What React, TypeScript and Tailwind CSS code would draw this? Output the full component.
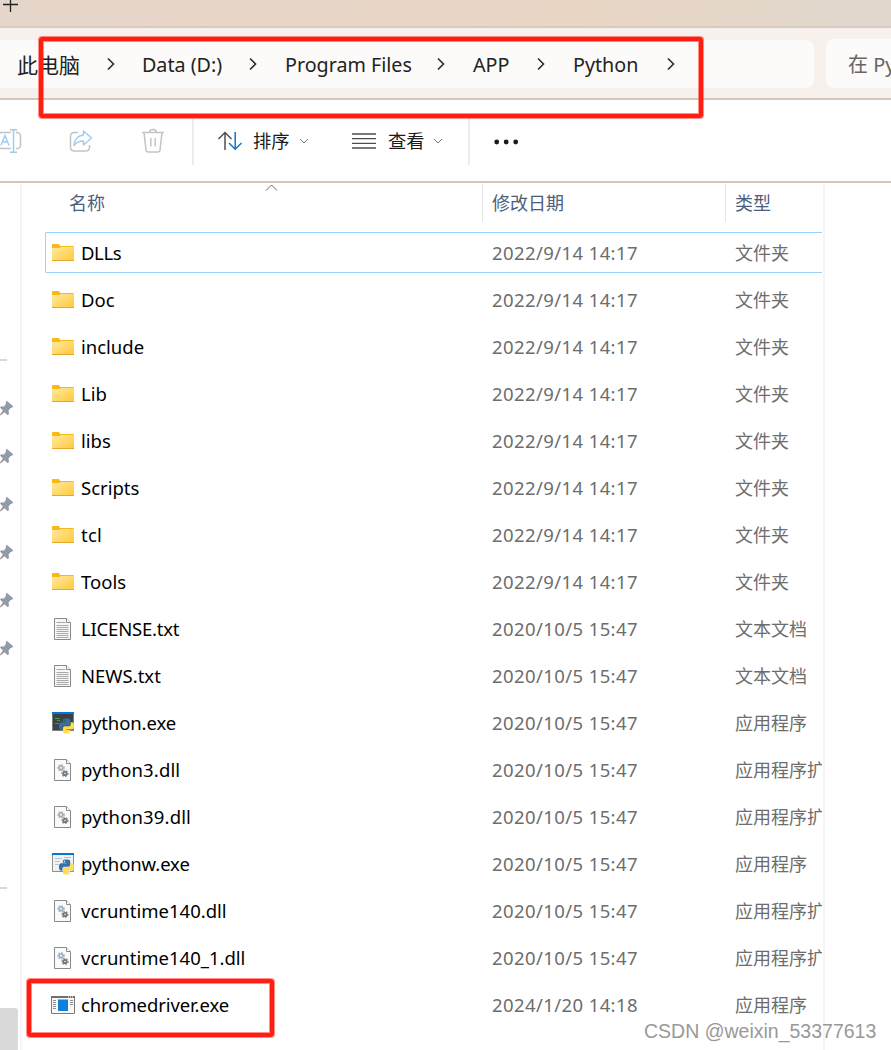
import type { ReactNode } from "react";

const PYTHON_HALF =
  "M14.25.18l.9.2.73.26.59.3.45.32.34.34.25.34.16.33.1.3.04.26.02.2-.01.13V8.5l-.05.63-.13.55-.21.46-.26.38-.3.31-.33.25-.35.19-.35.14-.33.1-.3.07-.26.04-.21.02H8.77l-.69.05-.59.14-.5.22-.41.27-.33.32-.27.35-.2.36-.15.37-.1.35-.07.32-.04.27-.02.21v3.06H3.17l-.21-.03-.28-.07-.32-.12-.35-.18-.36-.26-.36-.36-.35-.46-.32-.59-.28-.73-.21-.88-.14-1.05-.05-1.23.06-1.22.16-1.04.24-.87.32-.71.36-.57.4-.44.42-.33.42-.24.4-.16.36-.1.32-.05.24-.01h.16l.06.01h8.16v-.83H6.18l-.01-2.75-.02-.37.05-.34.11-.31.17-.28.25-.26.31-.23.38-.2.44-.18.51-.15.58-.12.64-.1.71-.06.77-.04.84-.02 1.27.05zm-6.3 1.98l-.23.33-.08.41.08.41.23.34.33.22.41.09.41-.09.33-.22.23-.34.08-.41-.08-.41-.23-.33-.33-.22-.41-.09-.41.09z";

type Kind = "folder" | "txt" | "python" | "dll" | "pythonw" | "exe";

const files: { name: string; kind: Kind; date: string; type: string; tracking: string }[] = [
  { name: "DLLs", kind: "folder", date: "2022/9/14 14:17", type: "文件夹", tracking: "tracking-[-0.4px]" },
  { name: "Doc", kind: "folder", date: "2022/9/14 14:17", type: "文件夹", tracking: "tracking-normal" },
  { name: "include", kind: "folder", date: "2022/9/14 14:17", type: "文件夹", tracking: "tracking-normal" },
  { name: "Lib", kind: "folder", date: "2022/9/14 14:17", type: "文件夹", tracking: "tracking-normal" },
  { name: "libs", kind: "folder", date: "2022/9/14 14:17", type: "文件夹", tracking: "tracking-normal" },
  { name: "Scripts", kind: "folder", date: "2022/9/14 14:17", type: "文件夹", tracking: "tracking-normal" },
  { name: "tcl", kind: "folder", date: "2022/9/14 14:17", type: "文件夹", tracking: "tracking-[0.2px]" },
  { name: "Tools", kind: "folder", date: "2022/9/14 14:17", type: "文件夹", tracking: "tracking-normal" },
  { name: "LICENSE.txt", kind: "txt", date: "2020/10/5 15:47", type: "文本文档", tracking: "tracking-[-0.2px]" },
  { name: "NEWS.txt", kind: "txt", date: "2020/10/5 15:47", type: "文本文档", tracking: "tracking-normal" },
  { name: "python.exe", kind: "python", date: "2020/10/5 15:47", type: "应用程序", tracking: "tracking-[-0.1px]" },
  { name: "python3.dll", kind: "dll", date: "2020/10/5 15:47", type: "应用程序扩展", tracking: "tracking-[0.15px]" },
  { name: "python39.dll", kind: "dll", date: "2020/10/5 15:47", type: "应用程序扩展", tracking: "tracking-[0.15px]" },
  { name: "pythonw.exe", kind: "pythonw", date: "2020/10/5 15:47", type: "应用程序", tracking: "tracking-[-0.1px]" },
  { name: "vcruntime140.dll", kind: "dll", date: "2020/10/5 15:47", type: "应用程序扩展", tracking: "tracking-normal" },
  { name: "vcruntime140_1.dll", kind: "dll", date: "2020/10/5 15:47", type: "应用程序扩展", tracking: "tracking-normal" },
  { name: "chromedriver.exe", kind: "exe", date: "2024/1/20 14:18", type: "应用程序", tracking: "tracking-[-0.1px]" },
];

const crumbs = [
  { label: "此电脑", width: "w-[90px]", sep: "w-[35px]", size: "text-[21px]" },
  { label: "Data (D:)", width: "w-[107px]", sep: "w-[36px]", size: "text-[19.7px]" },
  { label: "Program Files", width: "w-[152px]", sep: "w-[36px]", size: "text-[19.7px]" },
  { label: "APP", width: "w-[64px]", sep: "w-[36px]", size: "text-[19.7px]" },
  { label: "Python", width: "w-[94px]", sep: "w-[36px]", size: "text-[19.7px]" },
];

const Snake = () => (
  <g transform="translate(8 7.4) scale(0.63)">
    <path d={PYTHON_HALF} fill="#3571a3" />
    <path d={PYTHON_HALF} fill="#ffdc4e" transform="rotate(180 12 12)" />
  </g>
);

const Gear = ({ x, y, r, color }: { x: number; y: number; r: number; color: string }) => (
  <g fill="none" stroke={color}>
    <circle cx={x} cy={y} r={r} strokeWidth="1.8" />
    <circle cx={x} cy={y} r={r + 1.3} strokeWidth="1.1" strokeDasharray="1.5 1.5" />
  </g>
);

const FileIcon = ({ kind }: { kind: Kind }) => {
  if (kind === "folder") {
    return (
      <svg className="shrink-0" width="24" height="24" viewBox="0 0 24 24">
        <defs>
          <linearGradient id="folder" x1="0" y1="0" x2="1" y2="1">
            <stop offset="0" stopColor="#ffe9a2" />
            <stop offset="1" stopColor="#ffc937" />
          </linearGradient>
        </defs>
        <path d="M1 4a1 1 0 0 1 1-1h6l1 2h13a1 1 0 0 1 1 1v4H1z" fill="#f9b815" />
        <path d="M1 7h7.5l1.5-1h13v14H1z" fill="url(#folder)" />
        <path d="M1 19h22v1H1z" fill="#e6a82c" />
      </svg>
    );
  }
  if (kind === "txt" || kind === "dll") {
    return (
      <svg className="shrink-0" width="24" height="24" viewBox="0 0 24 24">
        <path d="M3.5 1.5h12l4 4v17h-16z" fill={kind === "txt" ? "#f7f7f7" : "#fafafa"} stroke="#8a8a8a" />
        <path d="M15.5 1.5v4h4" fill="#fff" stroke="#8a8a8a" />
        {kind === "txt" ? (
          <path d="M5.5 5.5h9M5.5 8.5h12M5.5 10.5h12M5.5 12.5h12M5.5 14.5h12M5.5 16.5h12M5.5 18.5h12M5.5 20.5h12" stroke="#a9a9a9" />
        ) : (
          <>
            <Gear x={10} y={9.8} r={1.9} color="#a3afba" />
            <Gear x={14} y={15.5} r={1.7} color="#6c777f" />
          </>
        )}
      </svg>
    );
  }
  if (kind === "exe") {
    return (
      <svg className="shrink-0" width="24" height="24" viewBox="0 0 24 24">
        <path d="M.5 3.5h23v17H.5z" fill="#f8f8f8" stroke="#7a7a7a" />
        <path d="M0 3h24v2H0z" fill="#6f6f6f" />
        <path d="M17 4h1M19 4h1M21 4h1" stroke="#fff" />
        <path d="M2 7.5h3M2 9.5h3M2 11.5h3M2 13.5h3M2 15.5h3M19 7.5h3M19 9.5h3M19 11.5h3" stroke="#8f8f8f" />
        <path d="M7 6.500h10V18H7z" fill="#0f80d7" />
      </svg>
    );
  }
  const dark = kind === "python";
  return (
    <svg className="shrink-0" width="24" height="24" viewBox="0 0 24 24">
      <path d="M1.5 2h21v17.500h-21z" fill={dark ? "#3c4145" : "#f2f2f2"} stroke={dark ? "#7b7f83" : "#8a8f94"} />
      <path d="M1 1h22v2H1z" fill="#0078d4" />
      {dark ? (
        <path d="M4 7.500h5M6 9.500h3M4 12.500h4" stroke="#3d9e45" />
      ) : (
        <path d="M4 6.500h7M4 9.500h5M4 12.500h4M13 5.500h7" stroke="#bfc3c6" />
      )}
      <Snake />
    </svg>
  );
};

const ChevronRight = () => (
  <svg width="8" height="14" viewBox="0 0 8 14" fill="none" stroke="#2b2b2b" strokeWidth="1.6">
    <path d="M1 1.5l5.5 5.5L1 12.5" />
  </svg>
);

const ChevronDown = () => (
  <svg width="10" height="6" viewBox="0 0 10 6" fill="none" stroke="#777" strokeWidth="1">
    <path d="M1 1l4 4 4-4" />
  </svg>
);

const Pin = () => (
  <svg width="16" height="16" viewBox="0 0 16 16" fill="#929ca4">
    <path d="M8.800.800 15.200 6.200 14 7.800l-1.400.1-2.100 2.800.5 3.200-1.300 1.300-3.200-3-4 3.300-.8-.7L4.900 10.600 2 7.500 3.200 6.200l2.900.3L8 3.500l-.2-1.600z" />
  </svg>
);

const RenameIcon = () => (
  <svg width="24" height="26" viewBox="0 0 24 26" fill="none" strokeWidth="1.5">
    <path d="M13 4.500H3.500a3 3 0 0 0-3 3v10a3 3 0 0 0 3 3H13M18 4.500h1a3.500 3.500 0 0 1 3.500 3.500v9a3.500 3.500 0 0 1-3.500 3.500h-1" stroke="#c4c4c4" />
    <path d="M3 17.500 7 7.500l4 10M4.500 14h5M12 1.700h7M12 24.300h7M15.500 1.700v22.600" stroke="#9fcdf0" />
  </svg>
);

const ShareIcon = () => (
  <svg width="24" height="24" viewBox="0 0 24 24" fill="none" strokeWidth="1.5" strokeLinejoin="round">
    <path d="M9 3.500H5a3.500 3.500 0 0 0-3.500 3.500v11.500A3.500 3.500 0 0 0 5 22h12a3.500 3.500 0 0 0 3.500-3.500V16" stroke="#c4c4c4" />
    <path d="M14.500 2l8 7-8 7v-4c-4 0-7 1-9.500 4.500C5.500 10.500 9 6.500 14.500 6z" stroke="#9fcdf0" />
  </svg>
);

const TrashIcon = () => (
  <svg width="24" height="26" viewBox="0 0 24 26" fill="none" stroke="#c4c4c4" strokeWidth="1.5">
    <path d="M1 4.500h22M8.500 4.500a3.500 3 0 0 1 7 0M3 4.500l2 17.500a2.300 2.300 0 0 0 2.300 2h9.400a2.300 2.300 0 0 0 2.300-2l2-17.500M9.800 10v8.500M14.200 10v8.500" />
  </svg>
);

const SortIcon = () => (
  <svg width="26" height="20" viewBox="0 0 26 20" fill="none" strokeWidth="1.5">
    <path d="M8 19V2M1.500 8 8 1.500 14.500 8" stroke="#505050" />
    <path d="M18.200 1v17M12 12l6.200 6.300L24.500 12" stroke="#0a78d0" />
  </svg>
);

const ViewIcon = () => (
  <svg width="24" height="16" viewBox="0 0 24 16" stroke="#4f4f4f" strokeWidth="1.3">
    <path d="M0 1h24M0 5.700h24M0 10.300h24M0 15h24" />
  </svg>
);

const ToolLabel = ({ children }: { children: ReactNode }) => (
  <span className="w-9 whitespace-nowrap text-[18.3px] leading-6 text-[#1b1b1b]">{children}</span>
);

const Sidebar = () => (
  <aside className="flex w-[22px] shrink-0 flex-col border-r-2 border-[#f5f5f5]">
    <div className="mt-[176px] h-[2px] w-[7px] bg-[#d9d9d9]" />
    <div className="mt-[23px] flex flex-col">
      {[0, 1, 2, 3, 4, 5].map((i) => (
        <div key={i} className="-ml-[2px] flex h-12 items-center">
          <Pin />
        </div>
      ))}
    </div>
    <div className="mt-[215px] h-[2px] w-[7px] bg-[#d9d9d9]" />
    <div className="mt-[119px] w-[18px] flex-1 rounded-tr-[3px] bg-[#d9d9d9]" />
  </aside>
);

const FileList = () => (
  <main className="flex w-[803px] shrink-0 flex-col overflow-hidden border-r-2 border-[#f5f5f5]">
    <div className="relative flex h-[39px] shrink-0 text-[18px] leading-[41px] text-[#4c607a]">
      <div className="w-[461px] border-r border-[#e5e5e5] pl-[47px]">名称</div>
      <div className="w-[243px] border-r border-[#e5e5e5] pl-[9px]">修改日期</div>
      <div className="pl-[9px]">类型</div>
      <svg className="absolute left-[243px] top-px" width="13" height="7" viewBox="0 0 13 7" fill="none" stroke="#666">
        <path d="M1 6.500 6.500 1 12 6.500" />
      </svg>
    </div>
    <div className="mt-[7px] flex flex-col">
      {files.map((file, i) => (
        <div key={file.name} className="flex h-[47px] items-center pl-[23px]">
          <div
            className={`flex h-[41px] w-[777px] shrink-0 items-center overflow-hidden rounded-l-[2px] border border-r-0 pl-[5px] ${
              i === 0 ? "border-[#99d1ff]" : "border-transparent"
            }`}
          >
            <FileIcon kind={file.kind} />
            <span className={`ml-[6px] w-[411px] shrink-0 text-[18.5px] text-black ${file.tracking}`}>{file.name}</span>
            <span className="w-[243px] shrink-0 text-[18.5px] tracking-[0.4px] text-[#6d6d6d]">{file.date}</span>
            <span className="shrink-0 whitespace-nowrap pt-[2px] text-[18px] text-[#6d6d6d]">{file.type}</span>
          </div>
        </div>
      ))}
    </div>
  </main>
);

export default function App() {
  return (
    <div className="relative flex h-[1050px] w-[891px] flex-col overflow-hidden bg-white font-['Noto_Sans','Noto_Sans_CJK_SC',sans-serif]">
      <div className="h-7 shrink-0 border-b-2 border-[#d9c9be] bg-linear-to-r from-[#e6d5ca] via-[#e9d6c5] via-65% to-[#e0d8ce]">
        <svg className="-ml-px -mt-[3px]" width="20" height="16" viewBox="0 0 20 16" stroke="#222" strokeWidth="1.3">
          <path d="M4 7.500h15M11.500 0v15" />
        </svg>
      </div>

      <div className="flex h-[72px] shrink-0 gap-3 border-b-2 border-[#d6c5b9] bg-[#f7f1ee] pt-3">
        <div className="flex h-12 w-[814px] shrink-0 items-center rounded-r-lg bg-[#fcfbf9] pl-[17px]">
          {crumbs.map((crumb) => (
            <div key={crumb.label} className="flex items-center">
              <span className={`whitespace-nowrap pt-[2px] leading-7 text-[#222] ${crumb.width} ${crumb.size}`}>{crumb.label}</span>
              <span className={crumb.sep}>
                <ChevronRight />
              </span>
            </div>
          ))}
        </div>
        <div className="-mt-px flex h-[49px] w-[65px] shrink-0 items-center overflow-hidden whitespace-nowrap rounded-l-lg bg-[#fcfbf9] pl-[22px] pt-[2px] text-[20px] text-[#666]">
          在 Python
        </div>
      </div>

      <div className="flex h-[83px] shrink-0 items-center border-b-2 border-[#d6c5b9]">
        <div className="-ml-[2px] w-[71px]">
          <RenameIcon />
        </div>
        <div className="w-[72px]">
          <ShareIcon />
        </div>
        <div className="w-[51px]">
          <TrashIcon />
        </div>
        <div className="mt-px h-[47px] w-[2px] bg-[#ececec]" />
        <div className="flex items-center pl-[23px]">
          <SortIcon />
          <div className="ml-[10px] flex items-center gap-[10px]">
            <ToolLabel>排序</ToolLabel>
            <ChevronDown />
          </div>
        </div>
        <div className="flex items-center pl-[43px]">
          <ViewIcon />
          <div className="ml-3 flex items-center gap-[9px]">
            <ToolLabel>查看</ToolLabel>
            <ChevronDown />
          </div>
        </div>
        <div className="ml-[25px] mt-px h-[47px] w-[2px] bg-[#ececec]" />
        <svg className="ml-[24px] mt-[2px]" width="25" height="6" viewBox="0 0 25 6" fill="#1b1b1b">
          <circle cx="2.7" cy="3" r="2.4" />
          <circle cx="12.2" cy="3" r="2.4" />
          <circle cx="21.7" cy="3" r="2.4" />
        </svg>
      </div>

      <div className="flex min-h-0 flex-1">
        <Sidebar />
        <FileList />
      </div>

      <div className="absolute left-[39px] top-[37px] h-[81px] w-[664px] rounded-[3px] border-4 border-[#ff1f12] shadow-[0_0_0_1px_#ff1f1280,inset_0_0_0_1px_#ff1f1280]" />
      <div className="absolute left-[27px] top-[979px] h-[58px] w-[247px] rounded-[3px] border-4 border-[#ff1f12] shadow-[0_0_0_1px_#ff1f1280,inset_0_0_0_1px_#ff1f1280]" />
      <div className="absolute left-[644px] top-[1019px] whitespace-nowrap font-['Liberation_Sans',sans-serif] text-[19.5px] leading-6 text-[#999] [text-shadow:1px_1px_0_#fff]">
        CSDN @weixin_53377613
      </div>
    </div>
  );
}
